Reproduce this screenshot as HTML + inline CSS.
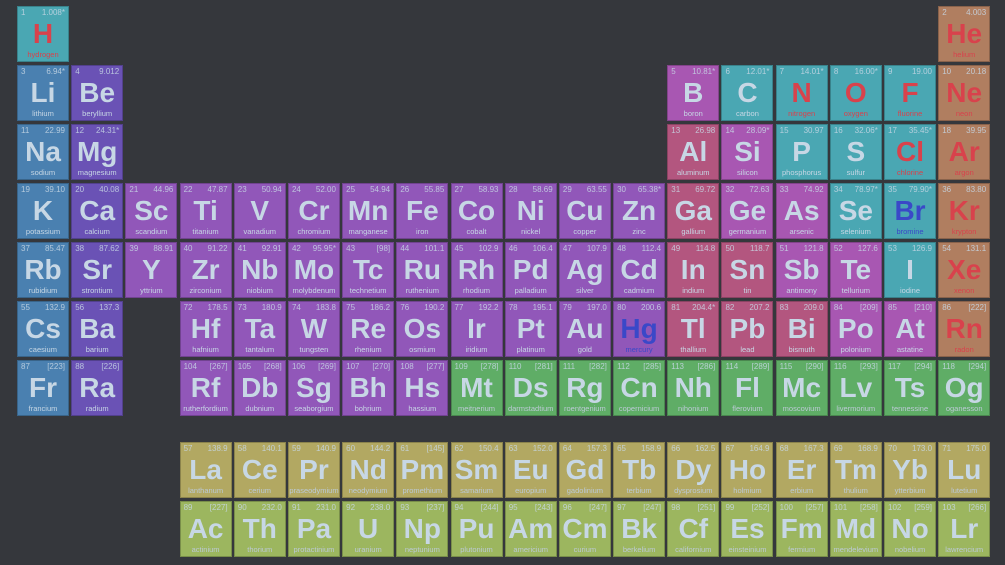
<!DOCTYPE html>
<html><head><meta charset="utf-8"><style>
html,body{margin:0;padding:0;background:#35373c;width:1005px;height:565px;overflow:hidden;font-family:"Liberation Sans",sans-serif}
.g{position:absolute;display:grid;grid-template-columns:repeat(18,52px);grid-auto-rows:56px;column-gap:2.2px;row-gap:3px}
.g2{grid-template-columns:repeat(15,52px)}
.c{position:relative;color:#c7d7e5;box-shadow:inset 0 0 0 1px rgba(0,0,0,.22)}
.c i{position:absolute;left:4px;top:2px;font-style:normal;font-size:8px;opacity:.85}
.c u{position:absolute;right:4px;top:2px;text-decoration:none;font-size:8px;opacity:.85}
.c b{position:absolute;left:0;right:0;top:12px;text-align:center;font-size:28px;line-height:31px}
.c s{position:absolute;left:0;right:0;bottom:3px;text-align:center;text-decoration:none;font-size:7.5px;white-space:nowrap;overflow:hidden}
.al{background:#4a80b0}.ae{background:#6a52b5}.tm{background:#9157b9}.pt{background:#b3567f}.md{background:#a857b2}.nm{background:#4aa7b3}.ng{background:#b07e60}.la{background:#b2a862}.ac{background:#9cb65f}.sh{background:#5fad66}
.r b,.r s{color:#d8424c}.l b,.l s{color:#3a48c8}
.la s,.ac s,.sh s{color:#bccad6}
</style></head><body>
<div class="g" style="left:17px;top:6px">
<div class="c nm r"><i>1</i><u>1.008*</u><b>H</b><s>hydrogen</s></div>
<div class="c ng r" style="grid-column:18"><i>2</i><u>4.003</u><b>He</b><s>helium</s></div>
<div class="c al"><i>3</i><u>6.94*</u><b>Li</b><s>lithium</s></div>
<div class="c ae"><i>4</i><u>9.012</u><b>Be</b><s>beryllium</s></div>
<div class="c md" style="grid-column:13"><i>5</i><u>10.81*</u><b>B</b><s>boron</s></div>
<div class="c nm"><i>6</i><u>12.01*</u><b>C</b><s>carbon</s></div>
<div class="c nm r"><i>7</i><u>14.01*</u><b>N</b><s>nitrogen</s></div>
<div class="c nm r"><i>8</i><u>16.00*</u><b>O</b><s>oxygen</s></div>
<div class="c nm r"><i>9</i><u>19.00</u><b>F</b><s>fluorine</s></div>
<div class="c ng r"><i>10</i><u>20.18</u><b>Ne</b><s>neon</s></div>
<div class="c al"><i>11</i><u>22.99</u><b>Na</b><s>sodium</s></div>
<div class="c ae"><i>12</i><u>24.31*</u><b>Mg</b><s>magnesium</s></div>
<div class="c pt" style="grid-column:13"><i>13</i><u>26.98</u><b>Al</b><s>aluminum</s></div>
<div class="c md"><i>14</i><u>28.09*</u><b>Si</b><s>silicon</s></div>
<div class="c nm"><i>15</i><u>30.97</u><b>P</b><s>phosphorus</s></div>
<div class="c nm"><i>16</i><u>32.06*</u><b>S</b><s>sulfur</s></div>
<div class="c nm r"><i>17</i><u>35.45*</u><b>Cl</b><s>chlorine</s></div>
<div class="c ng r"><i>18</i><u>39.95</u><b>Ar</b><s>argon</s></div>
<div class="c al"><i>19</i><u>39.10</u><b>K</b><s>potassium</s></div>
<div class="c ae"><i>20</i><u>40.08</u><b>Ca</b><s>calcium</s></div>
<div class="c tm"><i>21</i><u>44.96</u><b>Sc</b><s>scandium</s></div>
<div class="c tm"><i>22</i><u>47.87</u><b>Ti</b><s>titanium</s></div>
<div class="c tm"><i>23</i><u>50.94</u><b>V</b><s>vanadium</s></div>
<div class="c tm"><i>24</i><u>52.00</u><b>Cr</b><s>chromium</s></div>
<div class="c tm"><i>25</i><u>54.94</u><b>Mn</b><s>manganese</s></div>
<div class="c tm"><i>26</i><u>55.85</u><b>Fe</b><s>iron</s></div>
<div class="c tm"><i>27</i><u>58.93</u><b>Co</b><s>cobalt</s></div>
<div class="c tm"><i>28</i><u>58.69</u><b>Ni</b><s>nickel</s></div>
<div class="c tm"><i>29</i><u>63.55</u><b>Cu</b><s>copper</s></div>
<div class="c tm"><i>30</i><u>65.38*</u><b>Zn</b><s>zinc</s></div>
<div class="c pt"><i>31</i><u>69.72</u><b>Ga</b><s>gallium</s></div>
<div class="c md"><i>32</i><u>72.63</u><b>Ge</b><s>germanium</s></div>
<div class="c md"><i>33</i><u>74.92</u><b>As</b><s>arsenic</s></div>
<div class="c nm"><i>34</i><u>78.97*</u><b>Se</b><s>selenium</s></div>
<div class="c nm l"><i>35</i><u>79.90*</u><b>Br</b><s>bromine</s></div>
<div class="c ng r"><i>36</i><u>83.80</u><b>Kr</b><s>krypton</s></div>
<div class="c al"><i>37</i><u>85.47</u><b>Rb</b><s>rubidium</s></div>
<div class="c ae"><i>38</i><u>87.62</u><b>Sr</b><s>strontium</s></div>
<div class="c tm"><i>39</i><u>88.91</u><b>Y</b><s>yttrium</s></div>
<div class="c tm"><i>40</i><u>91.22</u><b>Zr</b><s>zirconium</s></div>
<div class="c tm"><i>41</i><u>92.91</u><b>Nb</b><s>niobium</s></div>
<div class="c tm"><i>42</i><u>95.95*</u><b>Mo</b><s>molybdenum</s></div>
<div class="c tm"><i>43</i><u>[98]</u><b>Tc</b><s>technetium</s></div>
<div class="c tm"><i>44</i><u>101.1</u><b>Ru</b><s>ruthenium</s></div>
<div class="c tm"><i>45</i><u>102.9</u><b>Rh</b><s>rhodium</s></div>
<div class="c tm"><i>46</i><u>106.4</u><b>Pd</b><s>palladium</s></div>
<div class="c tm"><i>47</i><u>107.9</u><b>Ag</b><s>silver</s></div>
<div class="c tm"><i>48</i><u>112.4</u><b>Cd</b><s>cadmium</s></div>
<div class="c pt"><i>49</i><u>114.8</u><b>In</b><s>indium</s></div>
<div class="c pt"><i>50</i><u>118.7</u><b>Sn</b><s>tin</s></div>
<div class="c md"><i>51</i><u>121.8</u><b>Sb</b><s>antimony</s></div>
<div class="c md"><i>52</i><u>127.6</u><b>Te</b><s>tellurium</s></div>
<div class="c nm"><i>53</i><u>126.9</u><b>I</b><s>iodine</s></div>
<div class="c ng r"><i>54</i><u>131.1</u><b>Xe</b><s>xenon</s></div>
<div class="c al"><i>55</i><u>132.9</u><b>Cs</b><s>caesium</s></div>
<div class="c ae"><i>56</i><u>137.3</u><b>Ba</b><s>barium</s></div>
<div class="c tm" style="grid-column:4"><i>72</i><u>178.5</u><b>Hf</b><s>hafnium</s></div>
<div class="c tm"><i>73</i><u>180.9</u><b>Ta</b><s>tantalum</s></div>
<div class="c tm"><i>74</i><u>183.8</u><b>W</b><s>tungsten</s></div>
<div class="c tm"><i>75</i><u>186.2</u><b>Re</b><s>rhenium</s></div>
<div class="c tm"><i>76</i><u>190.2</u><b>Os</b><s>osmium</s></div>
<div class="c tm"><i>77</i><u>192.2</u><b>Ir</b><s>iridium</s></div>
<div class="c tm"><i>78</i><u>195.1</u><b>Pt</b><s>platinum</s></div>
<div class="c tm"><i>79</i><u>197.0</u><b>Au</b><s>gold</s></div>
<div class="c tm l"><i>80</i><u>200.6</u><b>Hg</b><s>mercury</s></div>
<div class="c pt"><i>81</i><u>204.4*</u><b>Tl</b><s>thallium</s></div>
<div class="c pt"><i>82</i><u>207.2</u><b>Pb</b><s>lead</s></div>
<div class="c pt"><i>83</i><u>209.0</u><b>Bi</b><s>bismuth</s></div>
<div class="c md"><i>84</i><u>[209]</u><b>Po</b><s>polonium</s></div>
<div class="c md"><i>85</i><u>[210]</u><b>At</b><s>astatine</s></div>
<div class="c ng r"><i>86</i><u>[222]</u><b>Rn</b><s>radon</s></div>
<div class="c al"><i>87</i><u>[223]</u><b>Fr</b><s>francium</s></div>
<div class="c ae"><i>88</i><u>[226]</u><b>Ra</b><s>radium</s></div>
<div class="c tm" style="grid-column:4"><i>104</i><u>[267]</u><b>Rf</b><s>rutherfordium</s></div>
<div class="c tm"><i>105</i><u>[268]</u><b>Db</b><s>dubnium</s></div>
<div class="c tm"><i>106</i><u>[269]</u><b>Sg</b><s>seaborgium</s></div>
<div class="c tm"><i>107</i><u>[270]</u><b>Bh</b><s>bohrium</s></div>
<div class="c tm"><i>108</i><u>[277]</u><b>Hs</b><s>hassium</s></div>
<div class="c sh"><i>109</i><u>[278]</u><b>Mt</b><s>meitnerium</s></div>
<div class="c sh"><i>110</i><u>[281]</u><b>Ds</b><s>darmstadtium</s></div>
<div class="c sh"><i>111</i><u>[282]</u><b>Rg</b><s>roentgenium</s></div>
<div class="c sh"><i>112</i><u>[285]</u><b>Cn</b><s>copernicium</s></div>
<div class="c sh"><i>113</i><u>[286]</u><b>Nh</b><s>nihonium</s></div>
<div class="c sh"><i>114</i><u>[289]</u><b>Fl</b><s>flerovium</s></div>
<div class="c sh"><i>115</i><u>[290]</u><b>Mc</b><s>moscovium</s></div>
<div class="c sh"><i>116</i><u>[293]</u><b>Lv</b><s>livermorium</s></div>
<div class="c sh"><i>117</i><u>[294]</u><b>Ts</b><s>tennessine</s></div>
<div class="c sh"><i>118</i><u>[294]</u><b>Og</b><s>oganesson</s></div>
</div>
<div class="g g2" style="left:179.6px;top:442px">
<div class="c la"><i>57</i><u>138.9</u><b>La</b><s>lanthanum</s></div>
<div class="c la"><i>58</i><u>140.1</u><b>Ce</b><s>cerium</s></div>
<div class="c la"><i>59</i><u>140.9</u><b>Pr</b><s>praseodymium</s></div>
<div class="c la"><i>60</i><u>144.2</u><b>Nd</b><s>neodymium</s></div>
<div class="c la"><i>61</i><u>[145]</u><b>Pm</b><s>promethium</s></div>
<div class="c la"><i>62</i><u>150.4</u><b>Sm</b><s>samarium</s></div>
<div class="c la"><i>63</i><u>152.0</u><b>Eu</b><s>europium</s></div>
<div class="c la"><i>64</i><u>157.3</u><b>Gd</b><s>gadolinium</s></div>
<div class="c la"><i>65</i><u>158.9</u><b>Tb</b><s>terbium</s></div>
<div class="c la"><i>66</i><u>162.5</u><b>Dy</b><s>dysprosium</s></div>
<div class="c la"><i>67</i><u>164.9</u><b>Ho</b><s>holmium</s></div>
<div class="c la"><i>68</i><u>167.3</u><b>Er</b><s>erbium</s></div>
<div class="c la"><i>69</i><u>168.9</u><b>Tm</b><s>thulium</s></div>
<div class="c la"><i>70</i><u>173.0</u><b>Yb</b><s>ytterbium</s></div>
<div class="c la"><i>71</i><u>175.0</u><b>Lu</b><s>lutetium</s></div>
<div class="c ac"><i>89</i><u>[227]</u><b>Ac</b><s>actinium</s></div>
<div class="c ac"><i>90</i><u>232.0</u><b>Th</b><s>thorium</s></div>
<div class="c ac"><i>91</i><u>231.0</u><b>Pa</b><s>protactinium</s></div>
<div class="c ac"><i>92</i><u>238.0</u><b>U</b><s>uranium</s></div>
<div class="c ac"><i>93</i><u>[237]</u><b>Np</b><s>neptunium</s></div>
<div class="c ac"><i>94</i><u>[244]</u><b>Pu</b><s>plutonium</s></div>
<div class="c ac"><i>95</i><u>[243]</u><b>Am</b><s>americium</s></div>
<div class="c ac"><i>96</i><u>[247]</u><b>Cm</b><s>curium</s></div>
<div class="c ac"><i>97</i><u>[247]</u><b>Bk</b><s>berkelium</s></div>
<div class="c ac"><i>98</i><u>[251]</u><b>Cf</b><s>californium</s></div>
<div class="c ac"><i>99</i><u>[252]</u><b>Es</b><s>einsteinium</s></div>
<div class="c ac"><i>100</i><u>[257]</u><b>Fm</b><s>fermium</s></div>
<div class="c ac"><i>101</i><u>[258]</u><b>Md</b><s>mendelevium</s></div>
<div class="c ac"><i>102</i><u>[259]</u><b>No</b><s>nobelium</s></div>
<div class="c ac"><i>103</i><u>[266]</u><b>Lr</b><s>lawrencium</s></div>
</div>
</body></html>
